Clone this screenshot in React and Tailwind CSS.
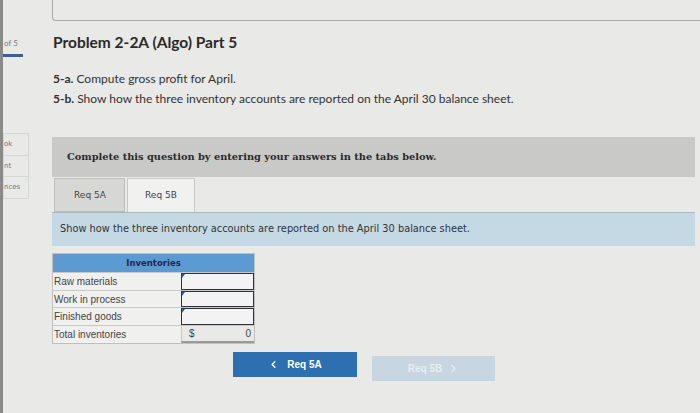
import React from 'react';
import { ChevronLeft, ChevronRight } from 'lucide-react';

const rows = ["Raw materials", "Work in process", "Finished goods"];

function App() {
  return (
    <div className="w-[700px] h-[413px] flex bg-[#e9e9e8] overflow-hidden font-['Lato',sans-serif] text-[#2b2b2b]">
      {/* left edge */}
      <div className="w-[3px] bg-[#8a8a8a]"></div>

      {/* sidebar */}
      <div className="w-[49px] flex flex-col">
        <div className="pt-[37px] pl-[1px] text-[8px] text-[#7a7a7a]">of 5</div>
        <div className="mt-[5px] w-[20px] h-[3px] bg-[#2f64a0]"></div>
        <div className="mt-[76px] w-[26px] flex flex-col border border-[#d6d6d6] text-[7px] text-[#777] font-['DejaVu_Sans',sans-serif]">
          <div className="h-[22px] flex items-center border-b border-[#d6d6d6]">ok</div>
          <div className="h-[21px] flex items-center border-b border-[#d6d6d6]">nt</div>
          <div className="h-[21px] flex items-center">nces</div>
        </div>
      </div>

      {/* main */}
      <div className="flex-1 flex flex-col">
        <div className="h-[21px] border-l border-b border-[#a9a9a9] rounded-bl-[4px]"></div>

        <h1 className="mt-[10px] ml-[1px] text-[15.5px] font-bold text-[#2a2a2a]">Problem 2-2A (Algo) Part 5</h1>

        <div className="mt-[15px] ml-[1px] text-[12px] leading-[20px] text-[#333]">
          <p><span className="font-bold">5-a.</span> Compute gross profit for April.</p>
          <p><span className="font-bold">5-b.</span> Show how the three inventory accounts are reported on the April 30 balance sheet.</p>
        </div>

        <div className="mt-[28px] mr-[5px] h-[40px] bg-[#c9c9c8] flex items-center pl-[15px] font-['DejaVu_Serif',serif] font-bold text-[9.8px] text-[#2a2a2a]">
          Complete this question by entering your answers in the tabs below.
        </div>

        <div className="flex pl-[2px] pt-[1px] h-[35px] font-['DejaVu_Sans',sans-serif] text-[9px] text-[#444]">
          <div className="w-[71px] bg-[#d7d7d6] border border-[#bdbdbd] flex items-center pl-[19px]">Req 5A</div>
          <div className="ml-[2px] w-[68px] bg-[#f1f1f0] border border-[#c8c8c8] border-b-0 flex items-center pl-[17px]">Req 5B</div>
        </div>

        <div className="mr-[5px] h-[34px] bg-[#c5d9e5] border-t border-[#a9b9c4] flex items-center pl-[8px] font-['DejaVu_Sans',sans-serif] text-[9.8px] text-[#333]">
          Show how the three inventory accounts are reported on the April 30 balance sheet.
        </div>

        <div className="mt-[7px] w-[203px] border border-[#bfbfbf] font-['Liberation_Sans',sans-serif] text-[10px] text-[#444]">
          <div className="h-[18px] bg-[#5c9ad2] flex items-center justify-center font-bold text-[8.5px] text-[#1b2a50] font-['DejaVu_Sans',sans-serif]">Inventories</div>
          {rows.map((r) => (
            <div key={r} className="flex h-[17.5px] border-t border-[#c8c8c8]">
              <div className="w-[128px] flex items-center pl-[1px] bg-[#f0f0ef]">{r}</div>
              <div className="flex-1 relative border border-[#2f3340] bg-[#f3f3f3]">
                <div className="absolute left-0 top-0 w-0 h-0 border-t-[4px] border-t-[#2f5ca8] border-r-[3px] border-r-transparent"></div>
              </div>
            </div>
          ))}
          <div className="flex h-[18px] border-t border-[#c8c8c8]">
            <div className="w-[128px] flex items-center pl-[1px] bg-[#f0f0ef]">Total inventories</div>
            <div className="flex-1 flex items-center justify-between pl-[7px] pr-[3px] border-l border-[#c8c8c8] border-b-2 border-b-[#9a9a9a]">
              <span>$</span>
              <span>0</span>
            </div>
          </div>
        </div>

        <div className="mt-[8px] ml-[181px] flex items-start gap-[15px]">
          <button className="w-[124px] h-[25px] bg-[#2e6fb1] text-white text-[10px] font-bold flex items-center justify-center gap-[8px] font-['Liberation_Sans',sans-serif]">
            <ChevronLeft size={11} strokeWidth={3} />
            <span>Req 5A</span>
          </button>
          <button className="mt-[4px] w-[123px] h-[25px] bg-[#c7d6e1] text-[#e6edf2] text-[10px] font-bold flex items-center justify-center gap-[6px] font-['Liberation_Sans',sans-serif]">
            <span>Req 5B</span>
            <ChevronRight size={11} strokeWidth={3} />
          </button>
        </div>
      </div>
    </div>
  );
}

export default App;
